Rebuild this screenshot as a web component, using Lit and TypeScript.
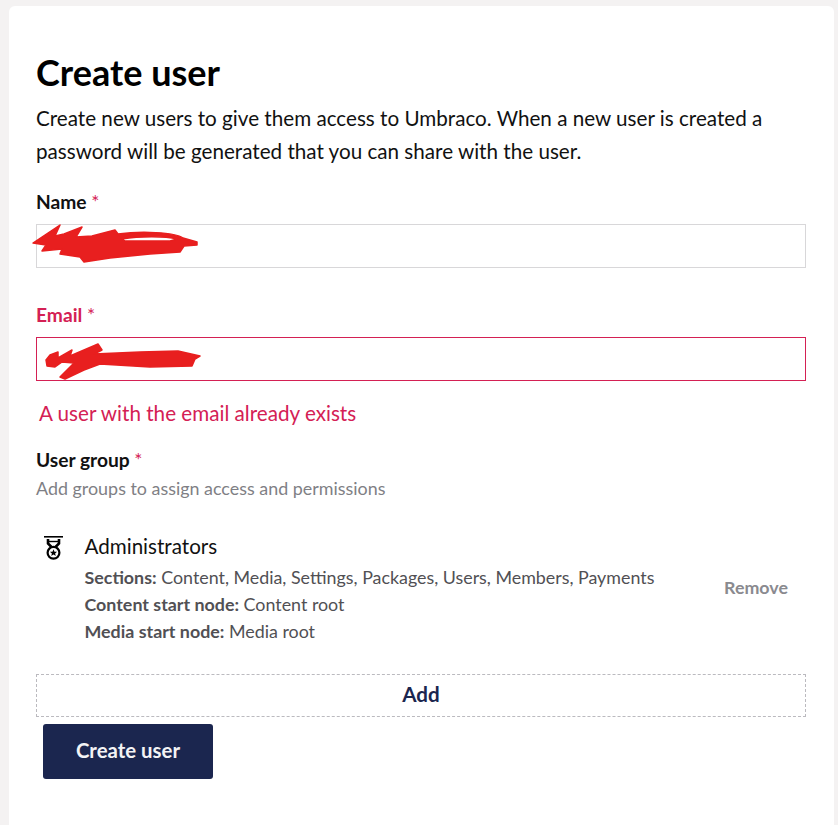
import { LitElement, html, css, svg } from "lit";
import { customElement } from "lit/decorators.js";

// red marker scrawled over the two input values in the reference
const scribbleName = svg`
    <path fill-rule="evenodd" d="M33 243 L60 225 L55 236 L64 234 L82 227 L76 237 L92 236 L115 230 L118 234 C140 231 175 232 183 238 L197 242 L197 245 L184 246 L180 252 L150 254 L110 258 L84 262 L80 257 L60 254 L62 249 L42 251 L46 245 Z M122 239 C140 236 165 236 177 239 L170 241 L125 241 Z" />
`;
const scribbleEmail = svg`
    <path d="M46 360 L50 355 L58 352 L58 358 L72 350 L70 356 L98 344 L102 350 L94 354 L140 352 L178 351 L200 356 L195 359 L192 366 L150 367 L100 364 L84 370 L65 379 L60 377 L74 363 L62 362 L55 367 L47 366 Z" />
`;

@customElement("app-root")
export class AppRoot extends LitElement {
    static styles = css`
        :host {
            display: block;
            height: 825px;
            overflow: hidden;
            background: #f4f2f2;
            font-family: Lato, "Open Sans", sans-serif;
            color: #000;
        }

        .card {
            box-sizing: border-box;
            position: relative;
            width: 825px;
            height: 819px;
            margin: 6px 0 0 9px;
            padding: 46px 28px 0 27px;
            background: #fff;
            border-radius: 6px 6px 0 0;
        }

        h1 {
            margin: 0;
            font-size: 36px;
            line-height: 40px;
            font-weight: 700;
        }

        .intro {
            margin: 10px 0 0;
            font-size: 20.65px;
            line-height: 33px;
            color: #111;
        }

        .field {
            margin-top: 22px;
        }

        .label {
            display: block;
            font-size: 19.2px;
            line-height: 24px;
            font-weight: 700;
            color: #111;
        }

        .label span {
            font-weight: 400;
            color: #d42054;
        }

        .input {
            box-sizing: border-box;
            height: 44px;
            margin-top: 10px;
            border: 1px solid #d8d7d9;
        }

        .invalid {
            margin-top: 35px;
        }

        .invalid .label {
            color: #d42054;
        }

        .invalid .input {
            border-color: #d42054;
        }

        .error {
            margin: 18px 0 0 3px;
            font-size: 20.65px;
            line-height: 28px;
            color: #d42054;
        }

        .groups {
            margin-top: 21px;
        }

        .hint {
            margin-top: 4px;
            font-size: 17.9px;
            line-height: 24px;
            color: #7f7f85;
        }

        .group {
            display: flex;
            align-items: center;
            margin-top: 31px;
        }

        .group svg {
            flex: none;
            align-self: flex-start;
            width: 19px;
            height: 24px;
            margin: 5px 0 0 8px;
        }

        .details {
            flex: 1;
            margin-left: 21.5px;
            font-size: 17.85px;
            line-height: 27px;
            color: #515054;
        }

        .details b {
            font-weight: 700;
        }

        .group-name {
            margin-bottom: 3px;
            font-size: 20.6px;
            line-height: 30px;
            color: #111;
        }

        .remove {
            margin: 0 18px 2px 0;
            font-size: 17.85px;
            font-weight: 700;
            color: #8a8a8f;
        }

        .add {
            display: flex;
            align-items: center;
            justify-content: center;
            box-sizing: border-box;
            height: 43px;
            margin-top: 29px;
            padding-bottom: 4px;
            border: 1px dashed #bbbabf;
            font-size: 20.6px;
            font-weight: 700;
            color: #1b264f;
        }

        .create {
            display: block;
            width: 170px;
            height: 55px;
            margin: 7px 0 0 7px;
            padding: 0 0 4px;
            border: 0;
            border-radius: 3px;
            background: #1b264f;
            color: #f3f3f5;
            font: 700 20.4px Lato, "Open Sans", sans-serif;
        }

        .scribbles {
            position: absolute;
            left: -9px;
            top: -6px;
            width: 838px;
            height: 825px;
            pointer-events: none;
            fill: #e81f1f;
            stroke: #e81f1f;
            stroke-width: 1.5;
            stroke-linejoin: round;
        }
    `;

    render() {
        return html`
            <div class="card">
                <h1>Create user</h1>
                <p class="intro">
                    Create new users to give them access to Umbraco. When a new user is created a
                    password will be generated that you can share with the user.
                </p>

                <div class="field">
                    <label class="label">Name <span>*</span></label>
                    <div class="input"></div>
                </div>

                <div class="field invalid">
                    <label class="label">Email <span>*</span></label>
                    <div class="input"></div>
                </div>
                <div class="error">A user with the email already exists</div>

                <div class="groups">
                    <label class="label">User group <span>*</span></label>
                    <div class="hint">Add groups to assign access and permissions</div>

                    <div class="group">
                        <svg viewBox="0 0 19 24" fill="none" stroke="#000" stroke-width="2.6">
                            <path d="M0 .8 H19" stroke-width="1.6" />
                            <path d="M4 3 V7.5 L7.5 11 M15 3 V7.5 L11.5 11" />
                            <path d="M4 5.5 H15" stroke-width="1.4" />
                            <circle cx="9.5" cy="16.8" r="5.9" stroke-width="2.2" />
                            <path d="M9.5 13.2 L10.5 15.7 L13.1 15.8 L11.1 17.5 L11.8 20 L9.5 18.6 L7.2 20 L7.9 17.5 L5.9 15.8 L8.5 15.7 Z" fill="#000" stroke="none" />
                        </svg>
                        <div class="details">
                            <div class="group-name">Administrators</div>
                            <div><b>Sections:</b> Content, Media, Settings, Packages, Users, Members, Payments</div>
                            <div><b>Content start node:</b> Content root</div>
                            <div><b>Media start node:</b> Media root</div>
                        </div>
                        <div class="remove">Remove</div>
                    </div>
                </div>

                <div class="add">Add</div>
                <button class="create">Create user</button>

                <svg class="scribbles" viewBox="0 0 838 825">
                    ${scribbleName}
                    ${scribbleEmail}
                </svg>
            </div>
        `;
    }
}
